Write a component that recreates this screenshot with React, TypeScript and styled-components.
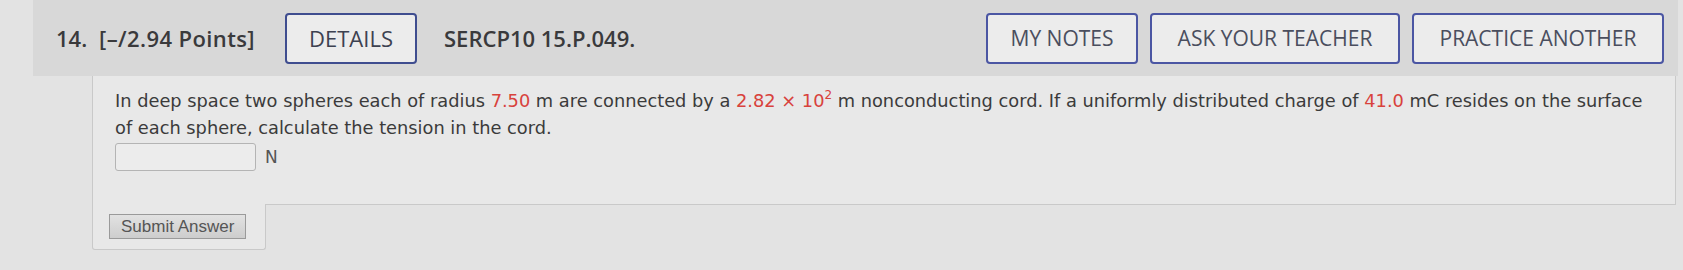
import styled, { createGlobalStyle } from "styled-components";

const GlobalStyle = createGlobalStyle`
  html, body {
    margin: 0;
    padding: 0;
    background: #e3e3e3;
  }
`;

const Page = styled.div`
  width: 1683px;
  height: 270px;
  padding: 0 5px 0 33px;
  box-sizing: border-box;
  overflow: hidden;
`;

const Header = styled.header`
  height: 76px;
  display: flex;
  align-items: center;
  padding: 0 14px 0 23px;
  background: #d8d8d8;
  font-family: "Open Sans", "Noto Sans", sans-serif;
  color: #3a3a3c;
`;

const QuestionNo = styled.span`
  font-size: 22px;
  font-weight: 600;
  width: 43px;
`;

const Points = styled.span`
  font-size: 22px;
  font-weight: 600;
  letter-spacing: 0.4px;
`;

const Button = styled.button<{ $w: number; $ml?: number }>`
  width: ${(p) => p.$w}px;
  height: 51px;
  margin-left: ${(p) => p.$ml ?? 0}px;
  border: 2px solid #4b56a3;
  border-radius: 4px;
  background: #ececec;
  font-family: "Open Sans", "Noto Sans", sans-serif;
  font-size: 21px;
  color: #4a4e5e;
  padding: 0;
  cursor: pointer;
`;

const DetailsButton = styled(Button)`
  color: #3d4150;
  border-color: #3f4d8f;
  font-size: 22px;
`;

const Code = styled.span`
  margin-left: 27px;
  font-size: 22px;
  font-weight: 600;
`;

const Actions = styled.div`
  margin-left: auto;
  display: flex;
  gap: 12px;
`;

const Body = styled.section`
  margin-left: 59px;
  margin-right: 2px;
`;

const QuestionBox = styled.div`
  height: 129px;
  box-sizing: border-box;
  padding: 11px 26px 0 22px;
  border: 1px solid #c9c9c9;
  border-top: none;
  background: #e8e8e8;
  font-family: "DejaVu Sans", Verdana, sans-serif;
  font-size: 17.8px;
  line-height: 27px;
  color: #3b3b3b;
`;

const Red = styled.span`
  color: #d8423c;
`;

const Sup = styled.sup`
  font-size: 12px;
  line-height: 0;
  vertical-align: 8px;
`;

const AnswerRow = styled.div`
  display: flex;
  align-items: center;
  gap: 9px;
  margin-top: 2px;
`;

const Input = styled.input`
  width: 141px;
  height: 28px;
  box-sizing: border-box;
  border: 1px solid #b4b4b4;
  border-radius: 3px;
  background: #ececec;
`;

const Unit = styled.span`
  color: #555;
  font-size: 17px;
`;

const SubmitTab = styled.div`
  width: 174px;
  height: 46px;
  box-sizing: border-box;
  margin-top: -1px;
  padding: 10px 0 0 16px;
  border: 1px solid #c9c9c9;
  border-top: none;
  border-radius: 0 0 3px 3px;
  background: #e8e8e8;
`;

const SubmitButton = styled.button`
  height: 25px;
  padding: 0 11px;
  border: 1px solid #9a9a9a;
  background: linear-gradient(#e2e2e2, #cdcdcd);
  font-family: "Liberation Sans", Arial, sans-serif;
  font-size: 17px;
  color: #555;
  cursor: pointer;
`;

export default function App() {
  return (
    <Page>
      <GlobalStyle />
      <Header>
        <QuestionNo>14.</QuestionNo>
        <Points>[–/2.94 Points]</Points>
        <DetailsButton $w={132} $ml={30}>
          DETAILS
        </DetailsButton>
        <Code>SERCP10 15.P.049.</Code>
        <Actions>
          <Button $w={152}>MY NOTES</Button>
          <Button $w={250}>ASK YOUR TEACHER</Button>
          <Button $w={252}>PRACTICE ANOTHER</Button>
        </Actions>
      </Header>
      <Body>
        <QuestionBox>
          In deep space two spheres each of radius <Red>7.50</Red> m are
          connected by a{" "}
          <Red>
            2.82 × 10<Sup>2</Sup>
          </Red>{" "}
          m nonconducting cord. If a uniformly distributed charge of{" "}
          <Red>41.0</Red> mC resides on the surface of each sphere, calculate
          the tension in the cord.
          <AnswerRow>
            <Input type="text" />
            <Unit>N</Unit>
          </AnswerRow>
        </QuestionBox>
        <SubmitTab>
          <SubmitButton>Submit Answer</SubmitButton>
        </SubmitTab>
      </Body>
    </Page>
  );
}
